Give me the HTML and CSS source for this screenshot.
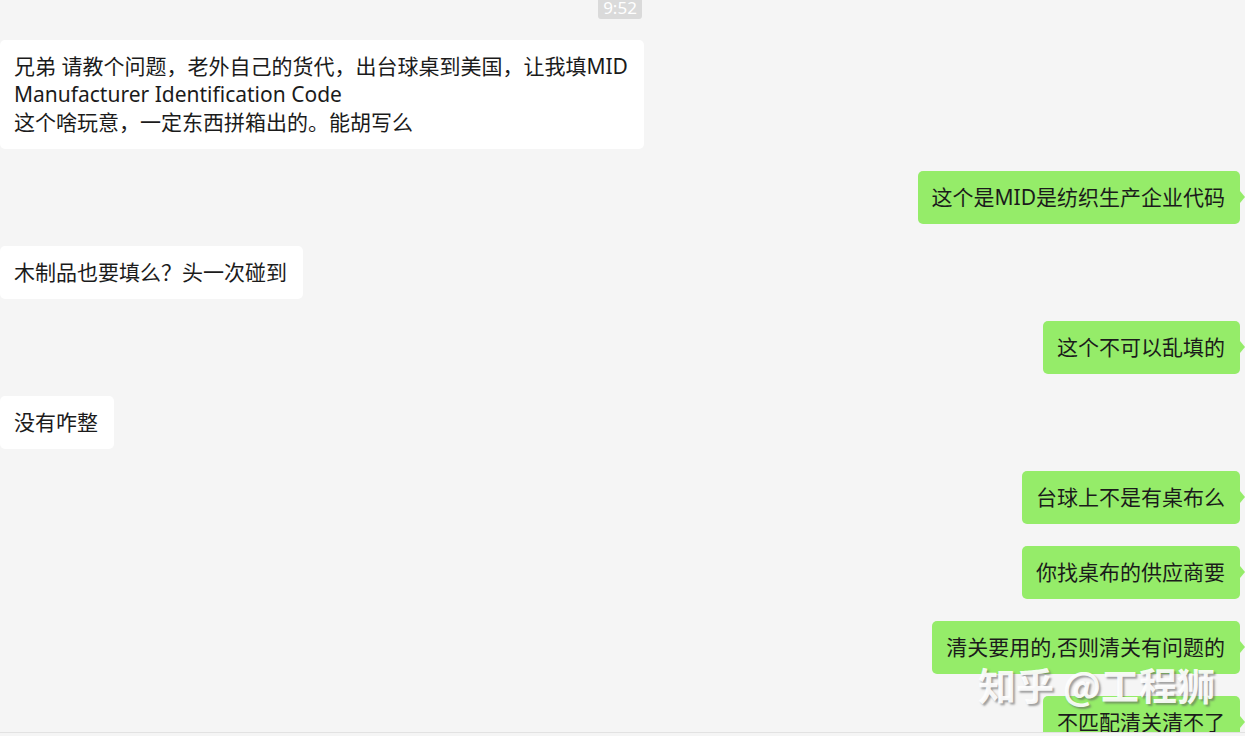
FILE: index.html
```html
<!DOCTYPE html>
<html lang="zh-CN">
<head>
<meta charset="utf-8">
<title>Chat</title>
<link rel="stylesheet" href="styles.css">
</head>
<body>
<div class="chat">
  <div class="time-row"><span class="time">9:52</span></div>
  <div class="row left"><div class="bubble white first">兄弟 请教个问题，老外自己的货代，出台球桌到美国，让我填MID<br>Manufacturer Identification Code<br>这个啥玩意，一定东西拼箱出的。能胡写么</div></div>
  <div class="row right"><div class="bubble green">这个是MID是纺织生产企业代码</div></div>
  <div class="row left"><div class="bubble white">木制品也要填么？头一次碰到</div></div>
  <div class="row right"><div class="bubble green">这个不可以乱填的</div></div>
  <div class="row left"><div class="bubble white">没有咋整</div></div>
  <div class="row right"><div class="bubble green">台球上不是有桌布么</div></div>
  <div class="row right"><div class="bubble green">你找桌布的供应商要</div></div>
  <div class="row right"><div class="bubble green">清关要用的,否则清关有问题的</div></div>
  <div class="row right"><div class="bubble green">不匹配清关清不了</div></div>
</div>
<div class="watermark">知乎 @工程狮</div>
<div class="bottom-bar"></div>
</body>
</html>
```
FILE: styles.css
```css
html, body {
  margin: 0;
  padding: 0;
}
body {
  width: 1245px;
  height: 736px;
  overflow: hidden;
  background: #f5f5f5;
  font-family: "Noto Sans", "Noto Sans CJK SC", sans-serif;
  color: #1b1b1b;
  position: relative;
}
.chat {
  display: flex;
  flex-direction: column;
  gap: 22px;
  padding: 0 5px 0 0;
}
.time-row {
  display: flex;
  justify-content: center;
  margin-bottom: -1px;
}
.time {
  display: block;
  background: #dadada;
  color: #fff;
  font-size: 17px;
  line-height: 17px;
  height: 17px;
  padding: 0 5px 3px;
  margin-top: -1px;
  border-radius: 0 0 3px 3px;
  font-family: "Noto Sans", "Liberation Sans", sans-serif;
}
.row {
  display: flex;
}
.row.left {
  justify-content: flex-start;
}
.row.right {
  justify-content: flex-end;
}
.bubble {
  position: relative;
  font-size: 21px;
  line-height: 28px;
  padding: 12px 16px 13px 14px;
  border-radius: 5px;
  white-space: nowrap;
}
.bubble.white {
  background: #ffffff;
}
.bubble.green {
  background: #95ec69;
  padding-right: 15px;
}
.bubble.green::after {
  content: "";
  position: absolute;
  right: -5px;
  top: 20px;
  border-top: 6px solid transparent;
  border-bottom: 6px solid transparent;
  border-left: 5px solid #95ec69;
}
.watermark {
  position: absolute;
  left: 978px;
  top: 660px;
  font-family: "Noto Sans CJK SC", sans-serif;
  font-size: 38px;
  line-height: 48px;
  font-weight: 700;
  color: rgba(255, 255, 255, 0.92);
  text-shadow: 2px 2px 2px rgba(90, 90, 90, 0.55);
  white-space: nowrap;
}
.bottom-bar {
  position: absolute;
  left: 0;
  bottom: 0;
  width: 100%;
  height: 3px;
  background: #f5f5f5;
  border-top: 1px solid #e2e2e2;
}
```
